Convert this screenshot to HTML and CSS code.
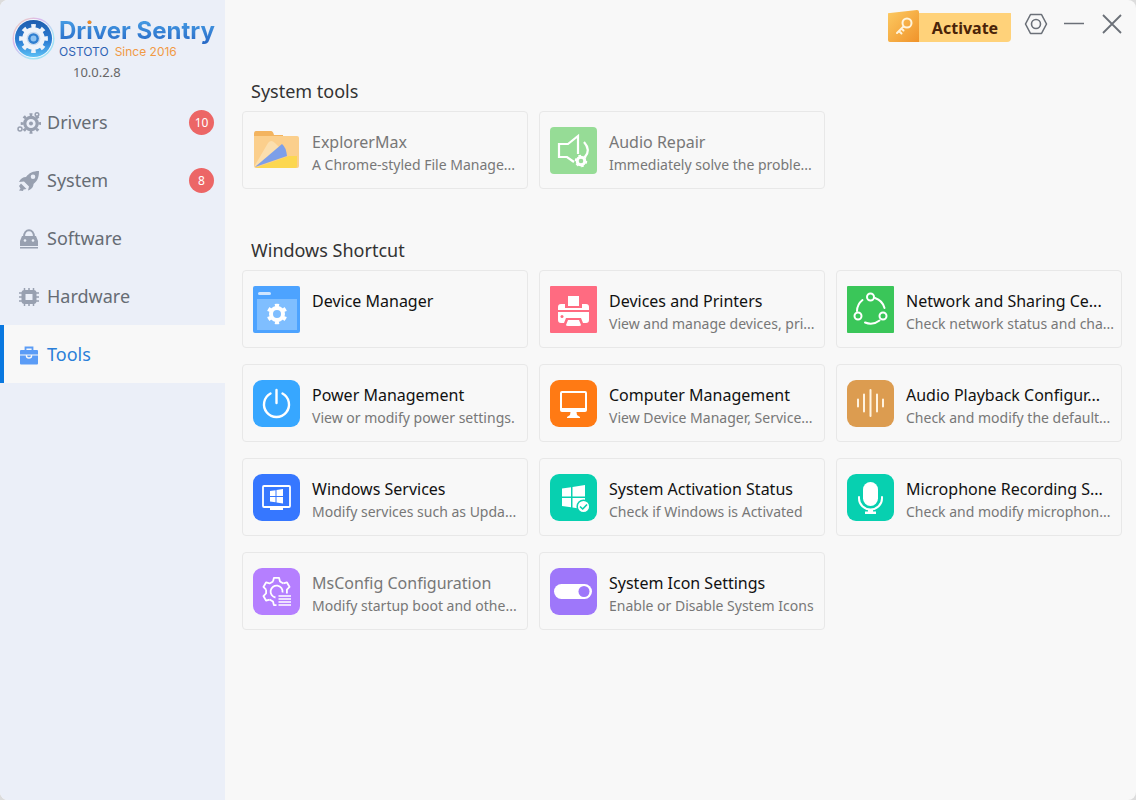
FILE: index.html
```html
<!DOCTYPE html>
<html lang="en">
<head>
  <meta charset="UTF-8">
  <title>Driver Sentry</title>
  <link rel="stylesheet" href="styles.css">
</head>
<body>
<div class="app">
  <aside class="sidebar">
    <div class="brand">
      <svg class="brand-logo" viewBox="0 0 44 44" aria-hidden="true">
        <defs>
          <linearGradient id="ring" x1="0" y1="0" x2="1" y2="1">
            <stop offset="0" stop-color="#f7d9b0"/>
            <stop offset=".35" stop-color="#d9b8f0"/>
            <stop offset=".7" stop-color="#a9e6f5"/>
            <stop offset="1" stop-color="#8fd8f7"/>
          </linearGradient>
          <linearGradient id="disc" x1="0" y1="0" x2="0" y2="1">
            <stop offset="0" stop-color="#1d5cae"/>
            <stop offset=".6" stop-color="#2f82d6"/>
            <stop offset="1" stop-color="#5cc0f5"/>
          </linearGradient>
        </defs>
        <circle cx="22" cy="22" r="21.500" fill="url(#ring)"/>
        <circle cx="22" cy="22" r="20" fill="#f4f8fd"/>
        <circle cx="22" cy="22" r="19" fill="url(#disc)"/>
        <circle cx="22" cy="22" r="8.500" fill="none" stroke="#eef3fa" stroke-width="6"/>
        <circle cx="22" cy="22" r="12.500" fill="none" stroke="#eef3fa" stroke-width="4.500" pathLength="16" stroke-dasharray=".9 1.100" transform="rotate(-100 22 22)"/>
        <circle cx="22" cy="22" r="7" fill="#c9daef"/>
        <circle cx="22" cy="22" r="5.500" fill="#2f7fd0"/>
        <circle cx="22" cy="22" r="3" fill="#8fc4f2"/>
      </svg>
      <div class="brand-text">
        <div class="brand-name">Driver Sentry</div>
        <div class="brand-sub"><span class="brand-company">OSTOTO</span><span class="brand-since">Since 2016</span></div>
      </div>
    </div>
    <div class="version">10.0.2.8</div>

    <nav class="nav">
      <a class="nav-item" href="#drivers">
        <svg viewBox="0 0 24 24" aria-hidden="true">
          <g fill="none" stroke="#98a0b0">
            <circle cx="14" cy="13.500" r="6.200" stroke-width="3.200"/>
            <circle cx="14" cy="13.500" r="8.800" stroke-width="3" pathLength="16" stroke-dasharray=".8 1.200" transform="rotate(-99 14 13.500)"/>
            <circle cx="3" cy="19" r="2" stroke-width="1.500"/>
            <circle cx="20" cy="4.500" r="1.800" stroke-width="1.500"/>
          </g>
          <circle cx="14" cy="13.500" r="2" fill="#98a0b0"/>
        </svg>
        <span>Drivers</span>
        <span class="badge">10</span>
      </a>
      <a class="nav-item" href="#system">
        <svg viewBox="0 0 24 24" aria-hidden="true">
          <path fill="#98a0b0" fill-rule="evenodd" d="M22 3C16 3 12 5 9 9C6 9 3.500 10.500 2 14L7 13.500L12 18.500L11 22.500C15 21 16.500 18.500 16.500 16C20.500 13 22 9 22 3ZM16 6.500a2.300 2.300 0 1 1 0 4.600a2.300 2.300 0 1 1 0-4.600Z"/>
          <path fill="#98a0b0" d="M4 15.500L9.500 21L6.500 21.500L6 23L2 22.500L3.500 20.500L2 18Z"/>
        </svg>
        <span>System</span>
        <span class="badge">8</span>
      </a>
      <a class="nav-item" href="#software">
        <svg viewBox="0 0 24 24" aria-hidden="true">
          <path fill="none" stroke="#98a0b0" stroke-width="2" d="M7 11C7 2 17 2 17 11"/>
          <path fill="#98a0b0" d="M5 10H19L21 15V20H3V15ZM3 21H21V22.500H3Z"/>
          <circle cx="8" cy="14.500" r="1.300" fill="#ebeff8"/>
          <circle cx="16" cy="14.500" r="1.300" fill="#ebeff8"/>
        </svg>
        <span>Software</span>
      </a>
      <a class="nav-item" href="#hardware">
        <svg viewBox="0 0 24 24" aria-hidden="true">
          <rect x="6.500" y="8" width="11" height="10" rx="1" fill="none" stroke="#98a0b0" stroke-width="4"/>
          <path stroke="#98a0b0" stroke-width="1.500" d="M7.500 4V7M12 4V7M16.500 4V7M7.500 19V22M12 19V22M16.500 19V22M2 9H5M2 13H5M2 17H5M19 9H22M19 13H22M19 17H22"/>
        </svg>
        <span>Hardware</span>
      </a>
      <a class="nav-item active" href="#tools">
        <svg viewBox="0 0 24 24" aria-hidden="true">
          <path fill="none" stroke="#5b9cf6" stroke-width="1.800" d="M8.500 9V5.500H15.500V9"/>
          <path fill="#5b9cf6" d="M4 8H20Q21 8 21 9V12.500H3V9Q3 8 4 8Z"/>
          <path fill="#5b9cf6" d="M3 13.500H21V21.500Q21 22.500 20 22.500H4Q3 22.500 3 21.500Z"/>
          <path fill="none" stroke="#f8f8f8" stroke-width="1.400" d="M9.500 13V14a2.500 2 0 0 0 5 0V13"/>
        </svg>
        <span>Tools</span>
      </a>
    </nav>
  </aside>

  <main class="main">
    <header class="topbar">
      <button class="activate" type="button">
        <svg viewBox="0 0 31 32" aria-hidden="true">
          <defs>
            <linearGradient id="gold" x1="0" y1="0" x2="1" y2="1">
              <stop offset="0" stop-color="#fcca62"/>
              <stop offset="1" stop-color="#f0932a"/>
            </linearGradient>
          </defs>
          <path fill="url(#gold)" d="M2 3L29 0Q31 0 31 2V32H2Q0 32 0 30V5Q0 3 2 3Z"/>
          <g fill="none" stroke="#fff4dc" stroke-width="2" stroke-linecap="round">
            <circle cx="19" cy="13" r="4.500"/>
            <path d="M15.500 16.500L9 23M11 21L13.500 23.500M13.500 18.500L15.500 20.500"/>
          </g>
        </svg>
        <span>Activate</span>
      </button>
      <button class="win-btn" type="button" aria-label="Settings">
        <svg viewBox="0 0 24 24" fill="none" stroke="#6b7078" stroke-width="1.600" stroke-linejoin="round">
          <path d="M6.500 2.500H17.500L22.500 12L17.500 21.500H6.500L1.500 12Z"/>
          <circle cx="12" cy="12" r="4.500"/>
        </svg>
      </button>
      <button class="win-btn" type="button" aria-label="Minimize">
        <svg viewBox="0 0 24 24" stroke="#6b7078" stroke-width="1.600"><path d="M2 11.500H22"/></svg>
      </button>
      <button class="win-btn" type="button" aria-label="Close">
        <svg viewBox="0 0 24 24" stroke="#6b7078" stroke-width="1.800"><path d="M3 3L21 21M21 3L3 21"/></svg>
      </button>
    </header>

    <section class="group">
      <h2>System tools</h2>
      <div class="cards">
        <button class="card muted" type="button">
          <svg viewBox="0 0 47 47" aria-hidden="true">
            <path fill="#f3b45f" d="M1 7Q1 4 3 4H18Q20 4 21 8H30V20H1Z"/>
            <path fill="#fbcf8c" d="M1 9H44Q46 9 46 11V39Q46 41 44 41H3Q1 41 1 39Z"/>
            <path fill="#fbdfae" d="M1 40L15 16Q18 12 22 16L28 22Z"/>
            <path fill="#fcd750" d="M2 41L36 29H44V39Q44 41 42 41Z"/>
            <path fill="#7d9fe9" d="M2 40L29 17Q33 20 34 29Z"/>
          </svg>
          <span class="card-text"><span class="card-title">ExplorerMax</span><span class="card-desc">A Chrome-styled File Manage...</span></span>
        </button>
        <button class="card muted" type="button">
          <svg viewBox="0 0 47 47" aria-hidden="true">
            <rect width="47" height="47" rx="4" fill="#96dc96"/>
            <g fill="none" stroke="#fff" stroke-width="2.200">
              <path d="M28 27V9L18 17H9V30H17L24 35"/>
              <path d="M34 15Q41 23 35 30"/>
              <circle cx="31" cy="34" r="3.800" stroke-width="3"/>
              <circle cx="31" cy="34" r="5.500" stroke-width="1.500" pathLength="12" stroke-dasharray="1 1"/>
            </g>
          </svg>
          <span class="card-text"><span class="card-title">Audio Repair</span><span class="card-desc">Immediately solve the proble...</span></span>
        </button>
      </div>
    </section>

    <section class="group">
      <h2>Windows Shortcut</h2>
      <div class="cards">
        <button class="card" type="button">
          <svg viewBox="0 0 47 47" aria-hidden="true">
            <rect width="47" height="47" rx="2" fill="#4da3ff"/>
            <rect x="4" y="13" width="40" height="31" fill="#7fbeff"/>
            <rect x="5" y="6" width="13" height="3" rx="1.500" fill="#cfe5ff"/>
            <circle cx="24" cy="28" r="6" fill="none" stroke="#fff" stroke-width="4"/>
            <circle cx="24" cy="28" r="8.500" fill="none" stroke="#fff" stroke-width="3.500" pathLength="12" stroke-dasharray=".9 1.100" transform="rotate(-103.500 24 28)"/>
          </svg>
          <span class="card-text"><span class="card-title">Device Manager</span></span>
        </button>
        <button class="card" type="button">
          <svg viewBox="0 0 47 47" aria-hidden="true">
            <rect width="47" height="47" rx="1" fill="#ff6b81"/>
            <path fill="#fff" d="M18 10H29V20H18ZM8 24V21Q8 18 11 18H15V22H32V18H36Q39 18 39 21V24ZM8 26H39V34Q39 37 36 37H33L31 32H16L14 37H11Q8 37 8 34ZM18 34H29L31 39Q31 40 29 40H18Q16 40 16 39Z"/>
            <circle cx="12" cy="30.500" r="1.500" fill="#ff6b81"/>
          </svg>
          <span class="card-text"><span class="card-title">Devices and Printers</span><span class="card-desc">View and manage devices, pri...</span></span>
        </button>
        <button class="card" type="button">
          <svg viewBox="0 0 47 47" aria-hidden="true">
            <rect width="47" height="47" rx="1" fill="#3ac659"/>
            <g fill="none" stroke="#fff" stroke-width="2" stroke-linecap="round">
              <circle cx="23.500" cy="11" r="3.500"/>
              <circle cx="11" cy="30" r="3.500"/>
              <circle cx="36" cy="30" r="3.500"/>
              <path d="M10 25A14.500 14.500 0 0 1 15.500 14M28 12A14.500 14.500 0 0 1 37.500 22M18 36.500A14.500 14.500 0 0 0 32.500 34.500"/>
            </g>
          </svg>
          <span class="card-text"><span class="card-title">Network and Sharing Ce...</span><span class="card-desc">Check network status and cha...</span></span>
        </button>

        <button class="card" type="button">
          <svg viewBox="0 0 47 47" aria-hidden="true">
            <rect width="47" height="47" rx="9" fill="#37a7ff"/>
            <g fill="none" stroke="#fff" stroke-width="2.400" stroke-linecap="round">
              <path d="M23.500 10V23"/>
              <path d="M17.500 13.500A12.500 12.500 0 1 0 29.500 13.500"/>
            </g>
          </svg>
          <span class="card-text"><span class="card-title">Power Management</span><span class="card-desc">View or modify power settings.</span></span>
        </button>
        <button class="card" type="button">
          <svg viewBox="0 0 47 47" aria-hidden="true">
            <rect width="47" height="47" rx="9" fill="#ff7a14"/>
            <path fill="#fff" fill-rule="evenodd" d="M12 11H35Q37 11 37 13V30Q37 32 35 32H26.500L27 35L30 37V38H17V37L20 35L20.500 32H12Q10 32 10 30V13Q10 11 12 11ZM12 13V28H35V13Z"/>
          </svg>
          <span class="card-text"><span class="card-title">Computer Management</span><span class="card-desc">View Device Manager, Service...</span></span>
        </button>
        <button class="card" type="button">
          <svg viewBox="0 0 47 47" aria-hidden="true">
            <rect width="47" height="47" rx="9" fill="#dc9c50"/>
            <path fill="none" stroke="#fff3e0" stroke-width="2" stroke-linecap="round" d="M11 19.500V26.500M17 14.500V31.500M23.500 10V36M30 14.500V31.500M36 19.500V26.500"/>
          </svg>
          <span class="card-text"><span class="card-title">Audio Playback Configur...</span><span class="card-desc">Check and modify the default...</span></span>
        </button>

        <button class="card" type="button">
          <svg viewBox="0 0 47 47" aria-hidden="true">
            <rect width="47" height="47" rx="9" fill="#3677ff"/>
            <rect x="10" y="12" width="27" height="21" rx="1" fill="none" stroke="#fff" stroke-width="1.800"/>
            <path fill="#fff" d="M17 17L22.500 16.200V22H17ZM23.500 16L30 15V22H23.500ZM17 23H22.500V28.300L17 27.500ZM23.500 23H30V29.500L23.500 28.500ZM17 34H30V36H17Z"/>
          </svg>
          <span class="card-text"><span class="card-title">Windows Services</span><span class="card-desc">Modify services such as Upda...</span></span>
        </button>
        <button class="card" type="button">
          <svg viewBox="0 0 47 47" aria-hidden="true">
            <rect width="47" height="47" rx="9" fill="#07d0b0"/>
            <path fill="#fff" d="M12 14.500L21 13.300V22.500H12ZM22.500 13L35 11V22.500H22.500ZM12 24H21V33.200L12 32ZM22.500 24H35V35.500L22.500 33.500Z"/>
            <circle cx="33.500" cy="32.500" r="6.300" fill="#fff" stroke="#07d0b0" stroke-width="1.500"/>
            <path fill="none" stroke="#07d0b0" stroke-width="1.600" d="M30 32.500L32.700 35L37 30.500"/>
          </svg>
          <span class="card-text"><span class="card-title">System Activation Status</span><span class="card-desc">Check if Windows is Activated</span></span>
        </button>
        <button class="card" type="button">
          <svg viewBox="0 0 47 47" aria-hidden="true">
            <rect width="47" height="47" rx="9" fill="#07d0b0"/>
            <rect x="16" y="8" width="15" height="24" rx="7.500" fill="#fff"/>
            <path fill="none" stroke="#fff" stroke-width="2" stroke-linecap="round" d="M12 23V24.500A11.500 11 0 0 0 35 24.500V23"/>
            <path fill="#fff" d="M21 35H26V37.500H29V40H18V37.500H21Z"/>
          </svg>
          <span class="card-text"><span class="card-title">Microphone Recording S...</span><span class="card-desc">Check and modify microphon...</span></span>
        </button>

        <button class="card muted" type="button">
          <svg viewBox="0 0 47 47" aria-hidden="true">
            <rect width="47" height="47" rx="9" fill="#b57fff"/>
            <g fill="none" stroke="#fff" stroke-width="1.800" stroke-linejoin="round" transform="translate(23.500 23.500)">
              <path id="tooth" d="M-3.500-10L-2.600-13.600H2.600L3.500-10L6.900-8"/>
              <use href="#tooth" transform="rotate(60)"/>
              <use href="#tooth" transform="rotate(240)"/>
              <use href="#tooth" transform="rotate(300)"/>
              <path d="M-6.900 8L-3.500 10L-2.600 13.600H0M-1 6A6 6 0 1 1 6 1"/>
              <path d="M2 4.500H14.500M2 7.500H14.500M2 10.500H14.500M2 13.500H14.500" stroke-width="1.500"/>
            </g>
          </svg>
          <span class="card-text"><span class="card-title">MsConfig Configuration</span><span class="card-desc">Modify startup boot and othe...</span></span>
        </button>
        <button class="card" type="button">
          <svg viewBox="0 0 47 47" aria-hidden="true">
            <rect width="47" height="47" rx="9" fill="#9e77fa"/>
            <rect x="4" y="16" width="38" height="15" rx="7.500" fill="#fff"/>
            <circle cx="34" cy="23.500" r="5.500" fill="#9e77fa"/>
          </svg>
          <span class="card-text"><span class="card-title">System Icon Settings</span><span class="card-desc">Enable or Disable System Icons</span></span>
        </button>
      </div>
    </section>
  </main>
</div>
</body>
</html>
```
FILE: styles.css
```css
* {
  box-sizing: border-box;
}
body {
  margin: 0;
  background: #dcdcdc;
  font-family: "Noto Sans", "Open Sans", sans-serif;
  color: #111;
}
button {
  font-family: inherit;
  border: none;
  background: none;
  padding: 0;
  cursor: pointer;
}
.app {
  display: flex;
  min-height: 100vh;
  background: #f8f8f8;
  border-radius: 8px;
  overflow: hidden;
}

/* sidebar */
.sidebar {
  width: 225px;
  flex-shrink: 0;
  background: #ebeff8;
}
.brand {
  display: flex;
  gap: 4px;
  padding: 17px 0 0 12px;
}
.brand-logo {
  width: 43px;
  height: 43px;
}
.brand-name {
  font-family: Inter, sans-serif;
  font-weight: 700;
  font-size: 24px;
  line-height: 28px;
  color: transparent;
  background: radial-gradient(circle at 30px 5px, #f58a1f 4px, transparent 5px), linear-gradient(#4aa3e8, #2565c4);
  -webkit-background-clip: text;
  background-clip: text;
}
.brand-sub {
  display: flex;
  gap: 6px;
  font-family: Inter, sans-serif;
  font-size: 12px;
  line-height: 14px;
}
.brand-company {
  color: #2d62b4;
}
.brand-since {
  color: #f19a45;
}
.version {
  padding: 2px 0 0 73px;
  font-size: 13px;
  line-height: 20px;
  color: #666;
}
.nav {
  margin-top: 11px;
}
.nav-item {
  display: flex;
  align-items: center;
  gap: 6px;
  height: 58px;
  padding: 0 11px 0 13px;
  border-left: 4px solid transparent;
  font-size: 18px;
  color: #666c74;
  text-decoration: none;
}
.nav-item svg {
  width: 24px;
  height: 24px;
}
.nav-item.active {
  background: #f8f8f8;
  border-left-color: #0a78e0;
  color: #2b7fd8;
}
.badge {
  width: 25px;
  height: 25px;
  margin-left: auto;
  border-radius: 50%;
  background: #ec6666;
  color: #fff;
  font-size: 12px;
  line-height: 25px;
  text-align: center;
}

/* content */
.main {
  flex: 1;
  min-width: 0;
  padding: 10px 14px 20px 17px;
}
.topbar {
  display: flex;
  justify-content: flex-end;
  gap: 14px;
  height: 68px;
  margin-right: -2px;
}
.activate {
  display: flex;
  width: 123px;
  height: 32px;
  margin-right: -1px;
  background: linear-gradient(transparent 3px, #ffd27a 3px);
  border-radius: 4px;
  color: #4a2308;
  font-size: 16px;
  font-weight: 700;
}
.activate svg {
  width: 31px;
  height: 32px;
}
.activate span {
  flex: 1;
  line-height: 36px;
}
.win-btn {
  width: 24px;
  height: 28px;
}
.win-btn svg {
  display: block;
  width: 24px;
  height: 24px;
}
.group {
  margin-bottom: 48px;
}
h2 {
  margin: 0;
  padding: 0 9px 7px;
  font-size: 18px;
  font-weight: 400;
  line-height: 26px;
  color: #333;
}
.cards {
  display: grid;
  grid-template-columns: repeat(3, minmax(0, 1fr));
  gap: 16px 11px;
}
.card {
  display: flex;
  align-items: flex-start;
  gap: 12px;
  height: 78px;
  padding: 0 0 0 10px;
  border: 1px solid #e8e8e8;
  border-radius: 4px;
  text-align: left;
  color: #111;
}
.card:hover {
  border-color: #b9d6f5;
}
.card svg {
  flex-shrink: 0;
  width: 47px;
  height: 47px;
  margin-top: 15px;
}
.card-text {
  min-width: 0;
  padding-top: 18px;
  white-space: nowrap;
}
.card-title,
.card-desc {
  display: block;
}
.card-title {
  font-size: 16px;
  line-height: 24px;
}
.card-desc {
  font-size: 14px;
  line-height: 22px;
  color: #777;
}
.muted .card-title {
  color: #777;
}
```
